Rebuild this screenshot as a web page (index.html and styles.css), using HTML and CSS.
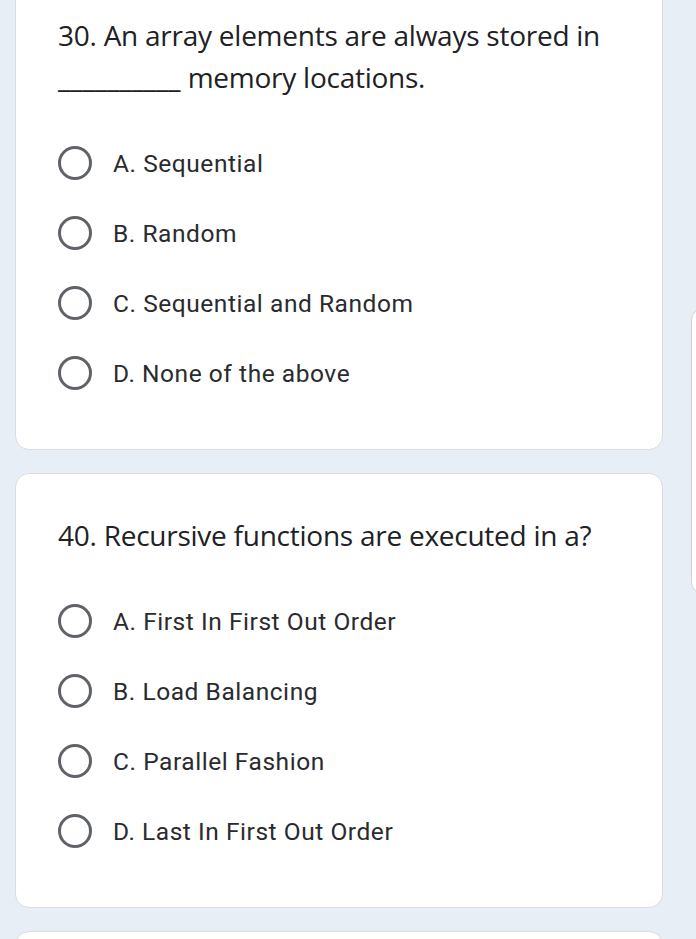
FILE: index.html
```html
<!DOCTYPE html>
<html lang="en">
<head>
<meta charset="utf-8">
<title>Quiz</title>
<link rel="stylesheet" href="styles.css">
</head>
<body>
<div class="page">
  <div class="card first">
    <div class="title">30. An array elements are always stored in <span class="blank">__________</span> memory locations.</div>
    <div class="options">
      <div class="opt"><span class="radio"></span><span class="label">A. Sequential</span></div>
      <div class="opt"><span class="radio"></span><span class="label">B. Random</span></div>
      <div class="opt"><span class="radio"></span><span class="label">C. Sequential and Random</span></div>
      <div class="opt"><span class="radio"></span><span class="label">D. None of the above</span></div>
    </div>
  </div>
  <div class="card">
    <div class="title">40. Recursive functions are executed in a?</div>
    <div class="options">
      <div class="opt"><span class="radio"></span><span class="label">A. First In First Out Order</span></div>
      <div class="opt"><span class="radio"></span><span class="label">B. Load Balancing</span></div>
      <div class="opt"><span class="radio"></span><span class="label">C. Parallel Fashion</span></div>
      <div class="opt"><span class="radio"></span><span class="label">D. Last In First Out Order</span></div>
    </div>
  </div>
  <div class="card last"></div>
</div>
<div class="side-panel"></div>
</body>
</html>
```
FILE: styles.css
```css
html, body {
  margin: 0;
  padding: 0;
  background: #e8eef5;
  overflow: hidden;
  height: 939px;
}
.page {
  width: 648px;
  margin-left: 15px;
  display: flex;
  flex-direction: column;
  gap: 23px;
}
.card {
  background: #fff;
  border: 1px solid #dadce0;
  border-radius: 14px;
  padding: 40px 42px 41px;
}
.card.first {
  margin-top: -27px;
}
.card.last {
  height: 200px;
}
.title {
  font-family: "Open Sans", sans-serif;
  font-size: 28px;
  line-height: 42px;
  letter-spacing: -0.25px;
  color: #202124;
  width: 560px;
}
.blank {
  letter-spacing: 0;
}
.options {
  margin-top: 30px;
  display: flex;
  flex-direction: column;
}
.opt {
  height: 70px;
  display: flex;
  align-items: center;
}
.radio {
  width: 28px;
  height: 28px;
  border: 3.5px solid #5f6368;
  border-radius: 50%;
  flex: none;
  margin-right: 21px;
}
.label {
  font-family: Roboto, sans-serif;
  font-size: 24.5px;
  letter-spacing: 0.55px;
  color: #2a2b2e;
}
.side-panel {
  position: absolute;
  left: 691px;
  top: 308px;
  width: 80px;
  height: 284px;
  background: #fff;
  border: 1px solid #d0d3d8;
  border-radius: 12px;
}
```
